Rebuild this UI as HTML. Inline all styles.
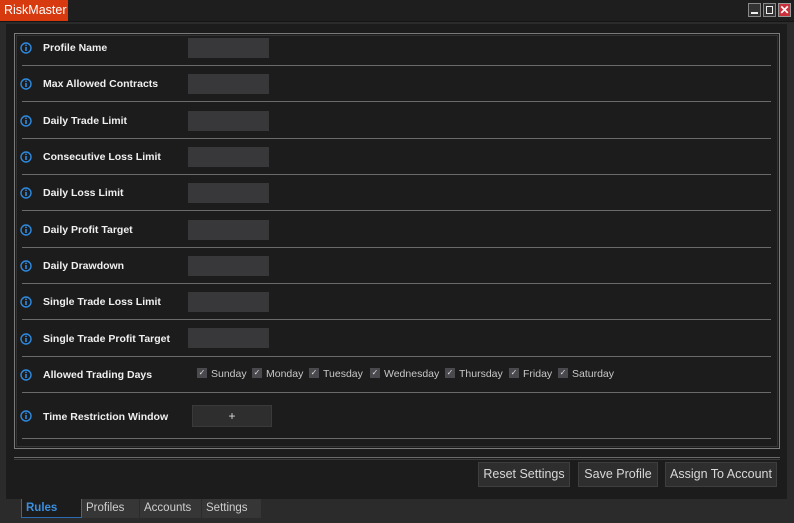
<!DOCTYPE html>
<html><head><meta charset="utf-8"><style>
*{margin:0;padding:0;box-sizing:border-box}
body{width:794px;height:523px;background:#2b2b2b;font-family:"Liberation Sans",sans-serif;position:relative;overflow:hidden}
.a{position:absolute}
.title{left:0;top:0;width:794px;height:22px;background:#1e1e1e;border-bottom:1px solid #151515}
.tt{left:0;top:0;width:68px;height:21px;background:#d83a10;color:#fff;font-size:12.5px;line-height:21px;padding-left:4px;white-space:nowrap;overflow:hidden}
.wb{top:3px;width:13px;height:14px;border:1px solid #888;background:#333}
.panel{left:6px;top:24px;width:781px;height:475px;background:#1c1c1c}
.box{left:14px;top:33px;width:766px;height:416px;border:1px solid #7a7a7a;outline:1px solid #333;outline-offset:-3px}
.sep{left:22px;width:749px;height:1px;background:#6a6a6a}
.lbl{left:43px;color:#f0f0f0;font-size:10.5px;font-weight:bold}
.inp{left:188px;width:81px;height:20px;background:#38383b}
.day{color:#c8c8c8;font-size:10.5px}
.cb{width:10px;height:10px;background:#4a4a4e;color:#ddd;font-size:8px;line-height:10px;text-align:center}
.btn{top:462px;height:25px;background:#2e2e2e;border:1px solid #3e3e3e;color:#d8d8d8;font-size:12.5px;line-height:23px;text-align:center;white-space:nowrap}
.tab{top:499px;height:19px;background:#363636;color:#cfcfcf;font-size:11.5px;line-height:18px;padding-left:4px}
</style></head><body>
<div class="a title"></div>
<div class="a tt">RiskMaster</div>
<div class="a wb" style="left:748px"><div class="a" style="left:2px;top:8px;width:7px;height:2px;background:#eee"></div></div>
<div class="a wb" style="left:763px"><div class="a" style="left:2px;top:2px;width:7px;height:8px;border:1px solid #eee"></div></div>
<div class="a wb" style="left:778px;background:#c8303a;border-color:#999;color:#fff;font-size:12px;font-weight:bold;line-height:12px;text-align:center">✕</div>
<div class="a panel"></div>
<div class="a box"></div>

<svg class="a" style="left:0;top:0" width="794" height="523">
<defs><g id="i"><circle cx="6" cy="6" r="5" fill="none" stroke="#2d8ae0" stroke-width="1.4"/><rect x="5.2" y="5" width="1.6" height="4" fill="#2d8ae0"/><rect x="5.2" y="2.6" width="1.6" height="1.5" fill="#2d8ae0"/></g></defs>
<use href="#i" x="20" y="42"/><use href="#i" x="20" y="78"/><use href="#i" x="20" y="115"/><use href="#i" x="20" y="151"/><use href="#i" x="20" y="187"/><use href="#i" x="20" y="224"/><use href="#i" x="20" y="260"/><use href="#i" x="20" y="296"/><use href="#i" x="20" y="333"/><use href="#i" x="20" y="369"/><use href="#i" x="20" y="410"/>
</svg>

<div class="a sep" style="top:65px"></div><div class="a sep" style="top:101px"></div><div class="a sep" style="top:138px"></div><div class="a sep" style="top:174px"></div><div class="a sep" style="top:210px"></div><div class="a sep" style="top:247px"></div><div class="a sep" style="top:283px"></div><div class="a sep" style="top:319px"></div><div class="a sep" style="top:356px"></div><div class="a sep" style="top:392px"></div><div class="a sep" style="top:438px"></div>

<div class="a lbl" style="top:42px">Profile Name</div><div class="a inp" style="top:38px"></div>
<div class="a lbl" style="top:78px">Max Allowed Contracts</div><div class="a inp" style="top:74px"></div>
<div class="a lbl" style="top:115px">Daily Trade Limit</div><div class="a inp" style="top:111px"></div>
<div class="a lbl" style="top:151px">Consecutive Loss Limit</div><div class="a inp" style="top:147px"></div>
<div class="a lbl" style="top:187px">Daily Loss Limit</div><div class="a inp" style="top:183px"></div>
<div class="a lbl" style="top:224px">Daily Profit Target</div><div class="a inp" style="top:220px"></div>
<div class="a lbl" style="top:260px">Daily Drawdown</div><div class="a inp" style="top:256px"></div>
<div class="a lbl" style="top:296px">Single Trade Loss Limit</div><div class="a inp" style="top:292px"></div>
<div class="a lbl" style="top:333px">Single Trade Profit Target</div><div class="a inp" style="top:328px"></div>
<div class="a lbl" style="top:369px">Allowed Trading Days</div>
<div class="a lbl" style="top:411px">Time Restriction Window</div>
<div class="a" style="left:192px;top:405px;width:80px;height:22px;background:#2e2e2e;border:1px solid #3a3a3a;color:#ddd;font-size:12px;text-align:center;line-height:20px">+</div>

<div class="a cb" style="left:197px;top:368px">✓</div><div class="a day" style="left:211px;top:368px">Sunday</div>
<div class="a cb" style="left:252px;top:368px">✓</div><div class="a day" style="left:266px;top:368px">Monday</div>
<div class="a cb" style="left:309px;top:368px">✓</div><div class="a day" style="left:323px;top:368px">Tuesday</div>
<div class="a cb" style="left:370px;top:368px">✓</div><div class="a day" style="left:384px;top:368px">Wednesday</div>
<div class="a cb" style="left:445px;top:368px">✓</div><div class="a day" style="left:459px;top:368px">Thursday</div>
<div class="a cb" style="left:509px;top:368px">✓</div><div class="a day" style="left:523px;top:368px">Friday</div>
<div class="a cb" style="left:558px;top:368px">✓</div><div class="a day" style="left:572px;top:368px">Saturday</div>

<div class="a" style="left:14px;top:457px;width:766px;height:1px;background:#6a6a6a"></div>
<div class="a" style="left:14px;top:459px;width:766px;height:1px;background:#3a3a3a"></div>

<div class="a btn" style="left:478px;width:92px">Reset Settings</div>
<div class="a btn" style="left:578px;width:80px">Save Profile</div>
<div class="a btn" style="left:665px;width:112px">Assign To Account</div>

<div class="a tab" style="left:21px;width:61px;background:#1c1c1c;border:1px solid #2a6cb0;border-top:none;color:#3a8ee0;font-weight:bold">Rules</div>
<div class="a tab" style="left:82px;width:57px">Profiles</div>
<div class="a tab" style="left:140px;width:61px">Accounts</div>
<div class="a tab" style="left:202px;width:59px">Settings</div>
</body></html>
